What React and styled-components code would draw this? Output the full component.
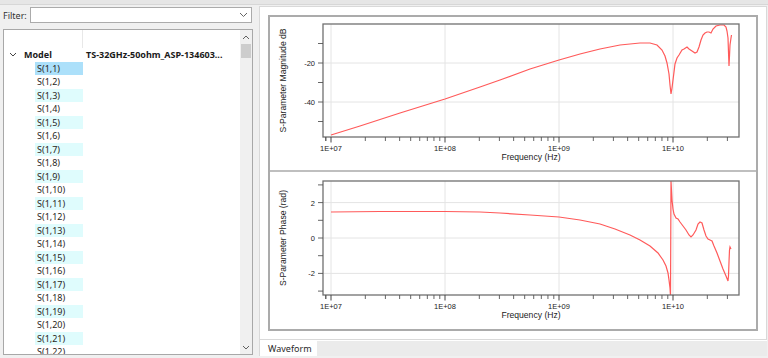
import React from "react";
import styled, { createGlobalStyle } from "styled-components";

const GlobalStyle = createGlobalStyle`
  *, *::before, *::after { box-sizing: border-box; }
  html, body { margin: 0; padding: 0; }
  body {
    background: #f0f0f0;
    font-family: "Noto Sans", "Liberation Sans", sans-serif;
    font-size: 9px;
    color: #1e1e1e;
  }
`;

const Window = styled.div`
  width: 768px;
  height: 358px;
  display: flex;
  flex-direction: column;
  overflow: hidden;
  background: #f0f0f0;
`;

const TopStrip = styled.div`
  height: 5px;
  background: #e6e6e6;
  border-bottom: 1px solid #d7d7d7;
`;

const Main = styled.div`
  flex: 1;
  display: flex;
  min-height: 0;
`;

const Sidebar = styled.div`
  width: 259px;
  padding: 2px 6px 3px 3px;
  display: flex;
  flex-direction: column;
  gap: 6px;
`;

const FilterRow = styled.div`
  height: 16px;
  display: flex;
  align-items: center;
  gap: 5px;
`;

const FilterLabel = styled.span`
  width: 22px;
  color: #333;
`;

const Combo = styled.div`
  flex: 1;
  height: 16px;
  margin-right: 1px;
  background: #fff;
  border: 1px solid #ababab;
  display: flex;
  align-items: center;
  justify-content: flex-end;
  padding-right: 3px;
`;

const TreeBox = styled.div`
  flex: 1;
  min-height: 0;
  display: flex;
  background: #fff;
  border: 1px solid #a8a8a8;
  overflow: hidden;
`;

const TreeContent = styled.div`
  flex: 1;
  display: flex;
  flex-direction: column;
  overflow: hidden;
`;

const HeaderRow = styled.div`
  height: 18px;
  flex: none;
  display: flex;
`;

const HeaderCell = styled.div`
  width: 79px;
  border-right: 1px solid #e8e8e8;
`;

const Row = styled.div`
  height: 13.5px;
  flex: none;
  display: flex;
  align-items: center;
  white-space: nowrap;
`;

const ModelCell = styled.div`
  width: 79px;
  display: flex;
  align-items: center;
  gap: 7px;
  padding-left: 5px;
  font-weight: 700;
  color: #1a1a1a;
`;

const ValueCell = styled.div`
  padding-left: 3px;
  font-weight: 700;
  color: #1a1a1a;
`;

const ItemCell = styled.div`
  margin-left: 31px;
  width: 48px;
  height: 100%;
  display: flex;
  align-items: center;
  padding-left: 2px;
  color: #2a2622;
  background: ${(p) => (p.$selected ? "#ace0fa" : p.$odd ? "#dffcfd" : "transparent")};
`;

const ScrollBar = styled.div`
  width: 12px;
  flex: none;
  background: #f0f0f0;
  display: flex;
  flex-direction: column;
`;

const ScrollButton = styled.div`
  height: 14px;
  display: flex;
  align-items: center;
  justify-content: center;
`;

const ScrollThumb = styled.div`
  height: 14px;
  margin: 0 1px;
  background: #cdcdcd;
`;

const ScrollTrack = styled.div`
  flex: 1;
`;

const RightPanel = styled.div`
  width: 508px;
  padding-top: 1px;
  display: flex;
  flex-direction: column;
`;

const ContentBox = styled.div`
  background: #fff;
  border: 1px solid #d9d9d9;
  padding: 8px;
`;

const PlotFrame = styled.div`
  border: 2px solid #ababab;
  display: flex;
  flex-direction: column;
  background: #fff;
`;

const PlotArea = styled.div`
  height: ${(p) => p.$h}px;
  border-top: ${(p) => (p.$divider ? "2px solid #bfbfbf" : "none")};
  box-sizing: content-box;
  svg { display: block; }
`;

const TabBar = styled.div`
  height: 16px;
  display: flex;
  background: #fff;
  border-left: 1px solid #d9d9d9;
  padding-left: 2px;
`;

const Tab = styled.div`
  width: 55px;
  background: #fff;
  padding-left: 6px;
  display: flex;
  align-items: center;
  color: #2a2a2a;
`;

const TabFiller = styled.div`
  flex: 1;
  background: #ebebeb;
  margin-top: 1px;
`;

const Chevron = ({ up, w = 6, color = "#555" }) => (
  <svg width={w + 2} height={w / 2 + 2} viewBox={`0 0 ${w + 2} ${w / 2 + 2}`}>
    <polyline
      points={
        up
          ? `1,${w / 2 + 1} ${w / 2 + 1},1 ${w + 1},${w / 2 + 1}`
          : `1,1 ${w / 2 + 1},${w / 2 + 1} ${w + 1},1`
      }
      fill="none"
      stroke={color}
      strokeWidth="1"
    />
  </svg>
);

/* ---------- charts ---------- */
const AX_L = 323;
const AX_R = 739;
const decX = (e) => 331 + 114 * (e - 7);
const MAJORS = [7, 8, 9, 10];
const MINORS = [];
for (let e = 6; e <= 10; e++) {
  for (let m = 2; m <= 9; m++) {
    const x = decX(e + Math.log10(m));
    if (x >= AX_L && x <= AX_R) MINORS.push(x);
  }
}
MINORS.push(decX(6 + Math.log10(9)));

const MAG_PTS = [
  [331, 135], [360, 126], [400, 113], [445, 99], [480, 87], [500, 80], [530, 69],
  [559, 60], [580, 54], [600, 49], [620, 45], [640, 43], [650, 43], [657, 45],
  [662, 50], [665, 56], [667, 63], [669, 74], [670, 85], [671, 94], [672, 88],
  [673, 80], [674, 72], [675, 64], [677, 58], [679, 55], [682, 50], [684, 49],
  [687, 47], [689, 49], [692, 51], [695, 53], [697, 52], [699, 47], [701, 40],
  [703, 35], [705, 33], [707, 32], [709, 32], [711, 33], [713, 29], [716, 26],
  [720, 25], [724, 25], [726, 27], [727, 31], [728, 38], [728.6, 55], [729, 66],
  [729.5, 56], [730, 45], [731, 38], [731.5, 35],
];

const PHASE_PTS = [
  [331, 212], [380, 211.5], [445, 211.5], [480, 212], [500, 213], [530, 215],
  [559, 217], [580, 220], [600, 224], [615, 229], [630, 235], [640, 240],
  [650, 246], [658, 253], [663, 260], [666, 266], [668, 273], [669, 280],
  [670, 288], [670.5, 296], [671, 181], [672, 200], [673, 209], [674, 214],
  [676, 218], [678, 219], [680, 222], [683, 226], [686, 230], [689, 235],
  [691, 237], [693, 235], [696, 230], [698, 224], [700, 222], [702, 223],
  [704, 230], [706, 236], [708, 239], [710, 240], [712, 241], [714, 246],
  [717, 253], [720, 261], [723, 269], [726, 276], [728, 281], [728.5, 276],
  [729, 262], [729.5, 250], [730, 247], [731, 249],
];

const TICK_FONT = '"Liberation Sans", Arial, sans-serif';

function Chart({ vy, h, top, bottom, yTicks, yLabels, title, pts, clipId }) {
  const labelY = bottom + 14;
  return (
    <svg width={485} height={h} viewBox={`270 ${vy} 485 ${h}`}>
      <defs>
        <clipPath id={clipId}>
          <rect x={AX_L} y={top} width={AX_R - AX_L} height={bottom - top} />
        </clipPath>
      </defs>
      {MAJORS.map((e) => (
        <line key={e} x1={decX(e)} x2={decX(e)} y1={top} y2={bottom} stroke="#e4e4e4" strokeWidth="1" />
      ))}
      {yLabels.map((t) => (
        <line key={t.v} x1={AX_L} x2={AX_R} y1={t.y} y2={t.y} stroke="#e4e4e4" strokeWidth="1" />
      ))}
      <polyline
        points={pts.map((p) => p.join(",")).join(" ")}
        fill="none"
        stroke="#ff5a5a"
        strokeWidth="1.2"
        clipPath={`url(#${clipId})`}
      />
      <rect x={AX_L} y={top} width={AX_R - AX_L} height={bottom - top} fill="none" stroke="#707070" strokeWidth="1.3" />
      {MINORS.map((x, i) => (
        <line key={i} x1={x} x2={x} y1={bottom} y2={bottom + 4} stroke="#555" strokeWidth="0.9" />
      ))}
      {MAJORS.map((e) => (
        <line key={e} x1={decX(e)} x2={decX(e)} y1={bottom} y2={bottom + 5.5} stroke="#444" strokeWidth="1" />
      ))}
      {yTicks.map((y) => (
        <line key={y} x1={AX_L - 5} x2={AX_L} y1={y} y2={y} stroke="#555" strokeWidth="0.9" />
      ))}
      <g fontFamily={TICK_FONT} fontSize="7.5" fill="#222">
        {MAJORS.map((e) => (
          <text key={e} x={decX(e)} y={labelY} textAnchor="middle">{`1E+${String(e).padStart(2, "0")}`}</text>
        ))}
        {yLabels.map((t) => (
          <text key={t.v} x={AX_L - 8} y={t.y + 3} textAnchor="end">{t.v}</text>
        ))}
      </g>
      <g fontFamily={TICK_FONT} fontSize="8.6" fill="#222">
        <text x={(AX_L + AX_R) / 2} y={bottom + 23} textAnchor="middle">Frequency (Hz)</text>
        <text
          x={0}
          y={0}
          textAnchor="middle"
          transform={`translate(286 ${(top + bottom) / 2}) rotate(-90)`}
        >
          {title}
        </text>
      </g>
    </svg>
  );
}

const magY = (db) => 24 - db * 1.95;
const phY = (r) => 238 - r * 17.7;

const ITEMS = Array.from({ length: 22 }, (_, i) => `S(1,${i + 1})`);

export default function App() {
  return (
    <Window>
      <GlobalStyle />
      <TopStrip />
      <Main>
        <Sidebar>
          <FilterRow>
            <FilterLabel>Filter:</FilterLabel>
            <Combo>
              <Chevron w={7} color="#666" />
            </Combo>
          </FilterRow>
          <TreeBox>
            <TreeContent>
              <HeaderRow>
                <HeaderCell />
              </HeaderRow>
              <Row>
                <ModelCell>
                  <Chevron w={6} color="#444" />
                  Model
                </ModelCell>
                <ValueCell>TS-32GHz-50ohm_ASP-134603...</ValueCell>
              </Row>
              {ITEMS.map((label, i) => (
                <Row key={label}>
                  <ItemCell $selected={i === 0} $odd={i % 2 === 0}>
                    {label}
                  </ItemCell>
                </Row>
              ))}
            </TreeContent>
            <ScrollBar>
              <ScrollButton>
                <Chevron up w={6} color="#606060" />
              </ScrollButton>
              <ScrollThumb />
              <ScrollTrack />
              <ScrollButton>
                <Chevron w={6} color="#606060" />
              </ScrollButton>
            </ScrollBar>
          </TreeBox>
        </Sidebar>
        <RightPanel>
          <ContentBox>
            <PlotFrame>
              <PlotArea $h={153}>
                <Chart
                  clipId="mag"
                  vy={17}
                  h={153}
                  top={24}
                  bottom={137}
                  yTicks={[-10, -20, -30, -40, -50].map(magY)}
                  yLabels={[
                    { v: "-20", y: magY(-20) },
                    { v: "-40", y: magY(-40) },
                  ]}
                  title="S-Parameter Magnitude dB"
                  pts={MAG_PTS}
                />
              </PlotArea>
              <PlotArea $h={157} $divider>
                <Chart
                  clipId="phase"
                  vy={172}
                  h={157}
                  top={181}
                  bottom={295}
                  yTicks={[3, 2, 1, 0, -1, -2, -3].map(phY)}
                  yLabels={[
                    { v: "2", y: phY(2) },
                    { v: "0", y: phY(0) },
                    { v: "-2", y: phY(-2) },
                  ]}
                  title="S-Parameter Phase (rad)"
                  pts={PHASE_PTS}
                />
              </PlotArea>
            </PlotFrame>
          </ContentBox>
          <TabBar>
            <Tab>Waveform</Tab>
            <TabFiller />
          </TabBar>
        </RightPanel>
      </Main>
    </Window>
  );
}
